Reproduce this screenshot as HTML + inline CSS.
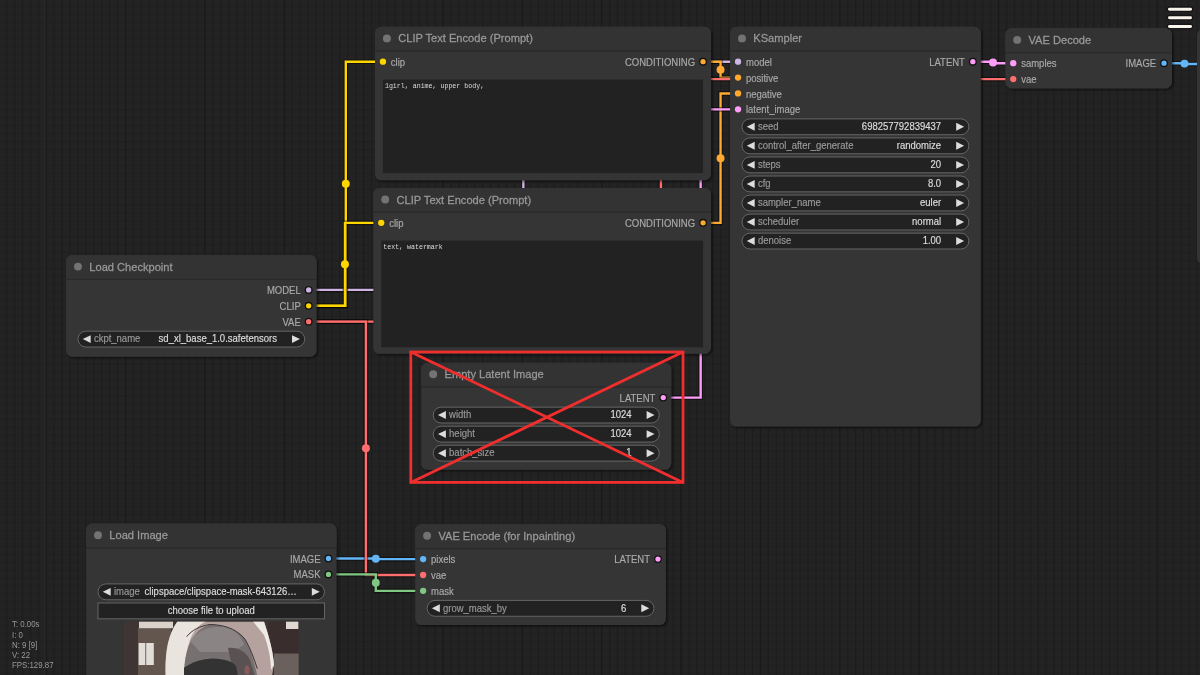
<!DOCTYPE html><html><head><meta charset="utf-8"><style>html,body{margin:0;padding:0;background:#222;overflow:hidden}svg{display:block;will-change:transform}</style></head><body>
<svg width="1200" height="675" viewBox="0 0 1200 675" font-family='"Liberation Sans", sans-serif'>
<defs>
<pattern id="g8" x="5.9" y="6.2" width="7.936" height="7.936" patternUnits="userSpaceOnUse">
<rect x="0" y="0" width="1.2" height="7.936" fill="#1c1c1c"/><rect x="0" y="0" width="7.936" height="1.2" fill="#1f1f1f"/>
</pattern>
<pattern id="g80" x="45.6" y="6.2" width="79.36" height="79.36" patternUnits="userSpaceOnUse">
<rect x="-0.2" y="0" width="1.4" height="79.36" fill="#1a1a1a"/>
</pattern>
<filter id="sh" x="-10%" y="-10%" width="120%" height="120%"><feDropShadow dx="1.6" dy="1.6" stdDeviation="1.3" flood-color="#000" flood-opacity="0.5"/></filter>
</defs>
<rect width="1200" height="675" fill="#232323"/>
<rect width="1200" height="675" fill="url(#g8)"/>
<rect width="1200" height="675" fill="url(#g80)"/>
<rect x="44.2" y="0" width="1.1" height="675" fill="#2c2c2c"/>
<path d="M308.66,289.92 H523.35 V61.72 H738.04" fill="none" stroke="rgba(0,0,0,0.45)" stroke-width="4.68"/>
<path d="M308.66,289.92 H523.35 V61.72 H738.04" fill="none" stroke="#CDB4E2" stroke-width="2.38"/>
<circle cx="523.35" cy="175.82" r="3.97" fill="#CDB4E2"/>
<path d="M703.06,61.72 H720.55 V77.59 H738.04" fill="none" stroke="rgba(0,0,0,0.45)" stroke-width="4.68"/>
<path d="M703.06,61.72 H720.55 V77.59 H738.04" fill="none" stroke="#FFA931" stroke-width="2.38"/>
<circle cx="720.55" cy="69.65" r="3.97" fill="#FFA931"/>
<path d="M703.06,222.82 H720.55 V93.46 H738.04" fill="none" stroke="rgba(0,0,0,0.45)" stroke-width="4.68"/>
<path d="M703.06,222.82 H720.55 V93.46 H738.04" fill="none" stroke="#FFA931" stroke-width="2.38"/>
<circle cx="720.55" cy="158.14" r="3.97" fill="#FFA931"/>
<path d="M663.26,397.62 H700.65 V109.33 H738.04" fill="none" stroke="rgba(0,0,0,0.45)" stroke-width="4.68"/>
<path d="M663.26,397.62 H700.65 V109.33 H738.04" fill="none" stroke="#FF9CF9" stroke-width="2.38"/>
<circle cx="700.65" cy="253.48" r="3.97" fill="#FF9CF9"/>
<path d="M972.86,61.72 H993.05 V63.22 H1013.24" fill="none" stroke="rgba(0,0,0,0.45)" stroke-width="4.68"/>
<path d="M972.86,61.72 H993.05 V63.22 H1013.24" fill="none" stroke="#FF9CF9" stroke-width="2.38"/>
<circle cx="993.05" cy="62.47" r="3.97" fill="#FF9CF9"/>
<path d="M308.66,321.66 H660.95 V79.09 H1013.24" fill="none" stroke="rgba(0,0,0,0.45)" stroke-width="4.68"/>
<path d="M308.66,321.66 H660.95 V79.09 H1013.24" fill="none" stroke="#FF6E6E" stroke-width="2.38"/>
<circle cx="660.95" cy="200.38" r="3.97" fill="#FF6E6E"/>
<path d="M308.66,305.79 H345.8 V61.72 H382.94" fill="none" stroke="rgba(0,0,0,0.45)" stroke-width="4.68"/>
<path d="M308.66,305.79 H345.8 V61.72 H382.94" fill="none" stroke="#FFD500" stroke-width="2.38"/>
<circle cx="345.8" cy="183.75" r="3.97" fill="#FFD500"/>
<path d="M308.66,305.79 H344.95 V222.82 H381.24" fill="none" stroke="rgba(0,0,0,0.45)" stroke-width="4.68"/>
<path d="M308.66,305.79 H344.95 V222.82 H381.24" fill="none" stroke="#FFD500" stroke-width="2.38"/>
<circle cx="344.95" cy="264.3" r="3.97" fill="#FFD500"/>
<path d="M328.46,558.52 H375.8 V559.12 H423.14" fill="none" stroke="rgba(0,0,0,0.45)" stroke-width="4.68"/>
<path d="M328.46,558.52 H375.8 V559.12 H423.14" fill="none" stroke="#64B5F6" stroke-width="2.38"/>
<circle cx="375.8" cy="558.82" r="3.97" fill="#64B5F6"/>
<path d="M308.66,321.66 H365.9 V574.99 H423.14" fill="none" stroke="rgba(0,0,0,0.45)" stroke-width="4.68"/>
<path d="M308.66,321.66 H365.9 V574.99 H423.14" fill="none" stroke="#FF6E6E" stroke-width="2.38"/>
<circle cx="365.9" cy="448.33" r="3.97" fill="#FF6E6E"/>
<path d="M328.46,574.39 H375.8 V590.86 H423.14" fill="none" stroke="rgba(0,0,0,0.45)" stroke-width="4.68"/>
<path d="M328.46,574.39 H375.8 V590.86 H423.14" fill="none" stroke="#81C784" stroke-width="2.38"/>
<circle cx="375.8" cy="582.63" r="3.97" fill="#81C784"/>
<path d="M1164.06,63.22 H1184.5 V64 H1204.94" fill="none" stroke="rgba(0,0,0,0.45)" stroke-width="4.68"/>
<path d="M1164.06,63.22 H1184.5 V64 H1204.94" fill="none" stroke="#64B5F6" stroke-width="2.38"/>
<circle cx="1184.5" cy="63.61" r="3.97" fill="#64B5F6"/>
<path d="M1203.35,28.8 H1230.65 A6.35,6.35 0 0 1 1237,35.15 V257.65 A6.35,6.35 0 0 1 1230.65,264 H1203.35 A6.35,6.35 0 0 1 1197,257.65 V35.15 A6.35,6.35 0 0 1 1203.35,28.8 Z" fill="#353535" filter="url(#sh)"/>
<g>
<path d="M381.35,26.8 H704.65 A6.35,6.35 0 0 1 711,33.15 V173.95 A6.35,6.35 0 0 1 704.65,180.3 H381.35 A6.35,6.35 0 0 1 375,173.95 V33.15 A6.35,6.35 0 0 1 381.35,26.8 Z" fill="#353535" filter="url(#sh)"/>
<path d="M381.35,26.8 H704.65 A6.35,6.35 0 0 1 711,33.15 V50.61 H375 V33.15 A6.35,6.35 0 0 1 381.35,26.8 Z" fill="#333"/>
<rect x="375" y="50.51" width="336" height="1.3" fill="rgba(0,0,0,0.2)"/>
<circle cx="386.9" cy="38.4" r="3.97" fill="#737373"/>
<text transform="translate(398.2,42.4) scale(1,1.05)" font-size="11.11" fill="#999" stroke="#999" stroke-width="0.25">CLIP Text Encode (Prompt)</text>
<circle cx="382.94" cy="61.72" r="3.15" fill="#FFD500"/>
<text transform="translate(390.87,65.82) scale(1,1.14)" font-size="9.52" fill="#AAA" stroke="#AAA" stroke-width="0.15">clip</text>
<circle cx="703.06" cy="61.72" r="3.3" fill="#FFA931" stroke="#111" stroke-width="1.3"/>
<text transform="translate(695.13,65.82) scale(1,1.14)" font-size="9.52" fill="#AAA" text-anchor="end" stroke="#AAA" stroke-width="0.15">CONDITIONING</text>
<rect x="382.94" y="79.61" width="320.13" height="93.49" fill="#222"/>
<text x="384.94" y="88.21" font-family="'Liberation Mono', monospace" font-size="6.62" fill="#DDD">1girl, anime, upper body,</text>
</g>
<g>
<path d="M379.65,187.9 H704.65 A6.35,6.35 0 0 1 711,194.25 V347.45 A6.35,6.35 0 0 1 704.65,353.8 H379.65 A6.35,6.35 0 0 1 373.3,347.45 V194.25 A6.35,6.35 0 0 1 379.65,187.9 Z" fill="#353535" filter="url(#sh)"/>
<path d="M379.65,187.9 H704.65 A6.35,6.35 0 0 1 711,194.25 V211.71 H373.3 V194.25 A6.35,6.35 0 0 1 379.65,187.9 Z" fill="#333"/>
<rect x="373.3" y="211.61" width="337.7" height="1.3" fill="rgba(0,0,0,0.2)"/>
<circle cx="385.2" cy="199.5" r="3.97" fill="#737373"/>
<text transform="translate(396.5,203.5) scale(1,1.05)" font-size="11.11" fill="#999" stroke="#999" stroke-width="0.25">CLIP Text Encode (Prompt)</text>
<circle cx="381.24" cy="222.82" r="3.15" fill="#FFD500"/>
<text transform="translate(389.17,226.92) scale(1,1.14)" font-size="9.52" fill="#AAA" stroke="#AAA" stroke-width="0.15">clip</text>
<circle cx="703.06" cy="222.82" r="3.3" fill="#FFA931" stroke="#111" stroke-width="1.3"/>
<text transform="translate(695.13,226.92) scale(1,1.14)" font-size="9.52" fill="#AAA" text-anchor="end" stroke="#AAA" stroke-width="0.15">CONDITIONING</text>
<rect x="381.24" y="240.61" width="321.83" height="106.69" fill="#222"/>
<text x="383.24" y="249.21" font-family="'Liberation Mono', monospace" font-size="6.62" fill="#DDD">text, watermark</text>
</g>
<g>
<path d="M736.45,26.8 H974.45 A6.35,6.35 0 0 1 980.8,33.15 V420.25 A6.35,6.35 0 0 1 974.45,426.6 H736.45 A6.35,6.35 0 0 1 730.1,420.25 V33.15 A6.35,6.35 0 0 1 736.45,26.8 Z" fill="#353535" filter="url(#sh)"/>
<path d="M736.45,26.8 H974.45 A6.35,6.35 0 0 1 980.8,33.15 V50.61 H730.1 V33.15 A6.35,6.35 0 0 1 736.45,26.8 Z" fill="#333"/>
<rect x="730.1" y="50.51" width="250.7" height="1.3" fill="rgba(0,0,0,0.2)"/>
<circle cx="742" cy="38.4" r="3.97" fill="#737373"/>
<text transform="translate(753.3,42.4) scale(1,1.05)" font-size="11.11" fill="#999" stroke="#999" stroke-width="0.25">KSampler</text>
<circle cx="738.04" cy="61.72" r="3.15" fill="#CDB4E2"/>
<text transform="translate(745.97,65.82) scale(1,1.14)" font-size="9.52" fill="#AAA" stroke="#AAA" stroke-width="0.15">model</text>
<circle cx="738.04" cy="77.59" r="3.15" fill="#FFA931"/>
<text transform="translate(745.97,81.69) scale(1,1.14)" font-size="9.52" fill="#AAA" stroke="#AAA" stroke-width="0.15">positive</text>
<circle cx="738.04" cy="93.46" r="3.15" fill="#FFA931"/>
<text transform="translate(745.97,97.56) scale(1,1.14)" font-size="9.52" fill="#AAA" stroke="#AAA" stroke-width="0.15">negative</text>
<circle cx="738.04" cy="109.33" r="3.15" fill="#FF9CF9"/>
<text transform="translate(745.97,113.43) scale(1,1.14)" font-size="9.52" fill="#AAA" stroke="#AAA" stroke-width="0.15">latent_image</text>
<circle cx="972.86" cy="61.72" r="3.3" fill="#FF9CF9" stroke="#111" stroke-width="1.3"/>
<text transform="translate(964.93,65.82) scale(1,1.14)" font-size="9.52" fill="#AAA" text-anchor="end" stroke="#AAA" stroke-width="0.15">LATENT</text>
<rect x="742" y="118.86" width="226.89" height="15.87" rx="7.94" fill="#222" stroke="#666" stroke-width="1"/>
<path d="M754.7,122.83 L746.77,126.79 L754.7,130.76 Z" fill="#DDD"/>
<path d="M956.2,122.83 L964.13,126.79 L956.2,130.76 Z" fill="#DDD"/>
<text transform="translate(757.88,129.97) scale(1,1.14)" font-size="9.52" fill="#999" stroke="#999" stroke-width="0.15">seed</text>
<text transform="translate(941.12,129.97) scale(1,1.14)" font-size="9.52" fill="#DDD" text-anchor="end" stroke="#DDD" stroke-width="0.15">698257792839437</text>
<rect x="742" y="137.9" width="226.89" height="15.87" rx="7.94" fill="#222" stroke="#666" stroke-width="1"/>
<path d="M754.7,141.87 L746.77,145.84 L754.7,149.81 Z" fill="#DDD"/>
<path d="M956.2,141.87 L964.13,145.84 L956.2,149.81 Z" fill="#DDD"/>
<text transform="translate(757.88,149.01) scale(1,1.14)" font-size="9.52" fill="#999" stroke="#999" stroke-width="0.15">control_after_generate</text>
<text transform="translate(941.12,149.01) scale(1,1.14)" font-size="9.52" fill="#DDD" text-anchor="end" stroke="#DDD" stroke-width="0.15">randomize</text>
<rect x="742" y="156.95" width="226.89" height="15.87" rx="7.94" fill="#222" stroke="#666" stroke-width="1"/>
<path d="M754.7,160.92 L746.77,164.89 L754.7,168.85 Z" fill="#DDD"/>
<path d="M956.2,160.92 L964.13,164.89 L956.2,168.85 Z" fill="#DDD"/>
<text transform="translate(757.88,168.06) scale(1,1.14)" font-size="9.52" fill="#999" stroke="#999" stroke-width="0.15">steps</text>
<text transform="translate(941.12,168.06) scale(1,1.14)" font-size="9.52" fill="#DDD" text-anchor="end" stroke="#DDD" stroke-width="0.15">20</text>
<rect x="742" y="176" width="226.89" height="15.87" rx="7.94" fill="#222" stroke="#666" stroke-width="1"/>
<path d="M754.7,179.96 L746.77,183.93 L754.7,187.9 Z" fill="#DDD"/>
<path d="M956.2,179.96 L964.13,183.93 L956.2,187.9 Z" fill="#DDD"/>
<text transform="translate(757.88,187.11) scale(1,1.14)" font-size="9.52" fill="#999" stroke="#999" stroke-width="0.15">cfg</text>
<text transform="translate(941.12,187.11) scale(1,1.14)" font-size="9.52" fill="#DDD" text-anchor="end" stroke="#DDD" stroke-width="0.15">8.0</text>
<rect x="742" y="195.04" width="226.89" height="15.87" rx="7.94" fill="#222" stroke="#666" stroke-width="1"/>
<path d="M754.7,199.01 L746.77,202.98 L754.7,206.95 Z" fill="#DDD"/>
<path d="M956.2,199.01 L964.13,202.98 L956.2,206.95 Z" fill="#DDD"/>
<text transform="translate(757.88,206.15) scale(1,1.14)" font-size="9.52" fill="#999" stroke="#999" stroke-width="0.15">sampler_name</text>
<text transform="translate(941.12,206.15) scale(1,1.14)" font-size="9.52" fill="#DDD" text-anchor="end" stroke="#DDD" stroke-width="0.15">euler</text>
<rect x="742" y="214.09" width="226.89" height="15.87" rx="7.94" fill="#222" stroke="#666" stroke-width="1"/>
<path d="M754.7,218.06 L746.77,222.03 L754.7,225.99 Z" fill="#DDD"/>
<path d="M956.2,218.06 L964.13,222.03 L956.2,225.99 Z" fill="#DDD"/>
<text transform="translate(757.88,225.2) scale(1,1.14)" font-size="9.52" fill="#999" stroke="#999" stroke-width="0.15">scheduler</text>
<text transform="translate(941.12,225.2) scale(1,1.14)" font-size="9.52" fill="#DDD" text-anchor="end" stroke="#DDD" stroke-width="0.15">normal</text>
<rect x="742" y="233.14" width="226.89" height="15.87" rx="7.94" fill="#222" stroke="#666" stroke-width="1"/>
<path d="M754.7,237.1 L746.77,241.07 L754.7,245.04 Z" fill="#DDD"/>
<path d="M956.2,237.1 L964.13,241.07 L956.2,245.04 Z" fill="#DDD"/>
<text transform="translate(757.88,244.25) scale(1,1.14)" font-size="9.52" fill="#999" stroke="#999" stroke-width="0.15">denoise</text>
<text transform="translate(941.12,244.25) scale(1,1.14)" font-size="9.52" fill="#DDD" text-anchor="end" stroke="#DDD" stroke-width="0.15">1.00</text>
</g>
<g>
<path d="M1011.65,28.3 H1165.65 A6.35,6.35 0 0 1 1172,34.65 V82.05 A6.35,6.35 0 0 1 1165.65,88.4 H1011.65 A6.35,6.35 0 0 1 1005.3,82.05 V34.65 A6.35,6.35 0 0 1 1011.65,28.3 Z" fill="#353535" filter="url(#sh)"/>
<path d="M1011.65,28.3 H1165.65 A6.35,6.35 0 0 1 1172,34.65 V52.11 H1005.3 V34.65 A6.35,6.35 0 0 1 1011.65,28.3 Z" fill="#333"/>
<rect x="1005.3" y="52.01" width="166.7" height="1.3" fill="rgba(0,0,0,0.2)"/>
<circle cx="1017.2" cy="39.9" r="3.97" fill="#737373"/>
<text transform="translate(1028.5,43.9) scale(1,1.05)" font-size="11.11" fill="#999" stroke="#999" stroke-width="0.25">VAE Decode</text>
<circle cx="1013.24" cy="63.22" r="3.15" fill="#FF9CF9"/>
<text transform="translate(1021.17,67.32) scale(1,1.14)" font-size="9.52" fill="#AAA" stroke="#AAA" stroke-width="0.15">samples</text>
<circle cx="1013.24" cy="79.09" r="3.15" fill="#FF6E6E"/>
<text transform="translate(1021.17,83.19) scale(1,1.14)" font-size="9.52" fill="#AAA" stroke="#AAA" stroke-width="0.15">vae</text>
<circle cx="1164.06" cy="63.22" r="3.3" fill="#64B5F6" stroke="#111" stroke-width="1.3"/>
<text transform="translate(1156.13,67.32) scale(1,1.14)" font-size="9.52" fill="#AAA" text-anchor="end" stroke="#AAA" stroke-width="0.15">IMAGE</text>
</g>
<g>
<path d="M72.45,255 H310.25 A6.35,6.35 0 0 1 316.6,261.35 V350.35 A6.35,6.35 0 0 1 310.25,356.7 H72.45 A6.35,6.35 0 0 1 66.1,350.35 V261.35 A6.35,6.35 0 0 1 72.45,255 Z" fill="#353535" filter="url(#sh)"/>
<path d="M72.45,255 H310.25 A6.35,6.35 0 0 1 316.6,261.35 V278.81 H66.1 V261.35 A6.35,6.35 0 0 1 72.45,255 Z" fill="#333"/>
<rect x="66.1" y="278.71" width="250.5" height="1.3" fill="rgba(0,0,0,0.2)"/>
<circle cx="78" cy="266.6" r="3.97" fill="#737373"/>
<text transform="translate(89.3,270.6) scale(1,1.05)" font-size="11.11" fill="#999" stroke="#999" stroke-width="0.25">Load Checkpoint</text>
<circle cx="308.66" cy="289.92" r="3.3" fill="#CDB4E2" stroke="#111" stroke-width="1.3"/>
<text transform="translate(300.73,294.02) scale(1,1.14)" font-size="9.52" fill="#AAA" text-anchor="end" stroke="#AAA" stroke-width="0.15">MODEL</text>
<circle cx="308.66" cy="305.79" r="3.3" fill="#FFD500" stroke="#111" stroke-width="1.3"/>
<text transform="translate(300.73,309.89) scale(1,1.14)" font-size="9.52" fill="#AAA" text-anchor="end" stroke="#AAA" stroke-width="0.15">CLIP</text>
<circle cx="308.66" cy="321.66" r="3.3" fill="#FF6E6E" stroke="#111" stroke-width="1.3"/>
<text transform="translate(300.73,325.76) scale(1,1.14)" font-size="9.52" fill="#AAA" text-anchor="end" stroke="#AAA" stroke-width="0.15">VAE</text>
<rect x="78" y="331.19" width="226.69" height="15.87" rx="7.94" fill="#222" stroke="#666" stroke-width="1"/>
<path d="M90.7,335.15 L82.77,339.12 L90.7,343.09 Z" fill="#DDD"/>
<path d="M292,335.15 L299.93,339.12 L292,343.09 Z" fill="#DDD"/>
<text transform="translate(93.88,342.3) scale(1,1.14)" font-size="9.52" fill="#999" stroke="#999" stroke-width="0.15">ckpt_name</text>
<text transform="translate(276.92,342.3) scale(1,1.14)" font-size="9.52" fill="#DDD" text-anchor="end" stroke="#DDD" stroke-width="0.15">sd_xl_base_1.0.safetensors</text>
</g>
<g>
<path d="M427.65,362.7 H664.85 A6.35,6.35 0 0 1 671.2,369.05 V463.45 A6.35,6.35 0 0 1 664.85,469.8 H427.65 A6.35,6.35 0 0 1 421.3,463.45 V369.05 A6.35,6.35 0 0 1 427.65,362.7 Z" fill="#353535" filter="url(#sh)"/>
<path d="M427.65,362.7 H664.85 A6.35,6.35 0 0 1 671.2,369.05 V386.51 H421.3 V369.05 A6.35,6.35 0 0 1 427.65,362.7 Z" fill="#333"/>
<rect x="421.3" y="386.41" width="249.9" height="1.3" fill="rgba(0,0,0,0.2)"/>
<circle cx="433.2" cy="374.3" r="3.97" fill="#737373"/>
<text transform="translate(444.5,378.3) scale(1,1.05)" font-size="11.11" fill="#999" stroke="#999" stroke-width="0.25">Empty Latent Image</text>
<circle cx="663.26" cy="397.62" r="3.3" fill="#FF9CF9" stroke="#111" stroke-width="1.3"/>
<text transform="translate(655.33,401.72) scale(1,1.14)" font-size="9.52" fill="#AAA" text-anchor="end" stroke="#AAA" stroke-width="0.15">LATENT</text>
<rect x="433.2" y="407.14" width="226.09" height="15.87" rx="7.94" fill="#222" stroke="#666" stroke-width="1"/>
<path d="M445.9,411.11 L437.97,415.08 L445.9,419.05 Z" fill="#DDD"/>
<path d="M646.6,411.11 L654.53,415.08 L646.6,419.05 Z" fill="#DDD"/>
<text transform="translate(449.08,418.25) scale(1,1.14)" font-size="9.52" fill="#999" stroke="#999" stroke-width="0.15">width</text>
<text transform="translate(631.52,418.25) scale(1,1.14)" font-size="9.52" fill="#DDD" text-anchor="end" stroke="#DDD" stroke-width="0.15">1024</text>
<rect x="433.2" y="426.19" width="226.09" height="15.87" rx="7.94" fill="#222" stroke="#666" stroke-width="1"/>
<path d="M445.9,430.16 L437.97,434.12 L445.9,438.09 Z" fill="#DDD"/>
<path d="M646.6,430.16 L654.53,434.12 L646.6,438.09 Z" fill="#DDD"/>
<text transform="translate(449.08,437.3) scale(1,1.14)" font-size="9.52" fill="#999" stroke="#999" stroke-width="0.15">height</text>
<text transform="translate(631.52,437.3) scale(1,1.14)" font-size="9.52" fill="#DDD" text-anchor="end" stroke="#DDD" stroke-width="0.15">1024</text>
<rect x="433.2" y="445.23" width="226.09" height="15.87" rx="7.94" fill="#222" stroke="#666" stroke-width="1"/>
<path d="M445.9,449.2 L437.97,453.17 L445.9,457.14 Z" fill="#DDD"/>
<path d="M646.6,449.2 L654.53,453.17 L646.6,457.14 Z" fill="#DDD"/>
<text transform="translate(449.08,456.34) scale(1,1.14)" font-size="9.52" fill="#999" stroke="#999" stroke-width="0.15">batch_size</text>
<text transform="translate(631.52,456.34) scale(1,1.14)" font-size="9.52" fill="#DDD" text-anchor="end" stroke="#DDD" stroke-width="0.15">1</text>
</g>
<g>
<path d="M92.45,523.6 H330.05 A6.35,6.35 0 0 1 336.4,529.95 V753.65 A6.35,6.35 0 0 1 330.05,760 H92.45 A6.35,6.35 0 0 1 86.1,753.65 V529.95 A6.35,6.35 0 0 1 92.45,523.6 Z" fill="#353535" filter="url(#sh)"/>
<path d="M92.45,523.6 H330.05 A6.35,6.35 0 0 1 336.4,529.95 V547.41 H86.1 V529.95 A6.35,6.35 0 0 1 92.45,523.6 Z" fill="#333"/>
<rect x="86.1" y="547.31" width="250.3" height="1.3" fill="rgba(0,0,0,0.2)"/>
<circle cx="98" cy="535.2" r="3.97" fill="#737373"/>
<text transform="translate(109.3,539.2) scale(1,1.05)" font-size="11.11" fill="#999" stroke="#999" stroke-width="0.25">Load Image</text>
<circle cx="328.46" cy="558.52" r="3.3" fill="#64B5F6" stroke="#111" stroke-width="1.3"/>
<text transform="translate(320.53,562.62) scale(1,1.14)" font-size="9.52" fill="#AAA" text-anchor="end" stroke="#AAA" stroke-width="0.15">IMAGE</text>
<circle cx="328.46" cy="574.39" r="3.3" fill="#81C784" stroke="#111" stroke-width="1.3"/>
<text transform="translate(320.53,578.49) scale(1,1.14)" font-size="9.52" fill="#AAA" text-anchor="end" stroke="#AAA" stroke-width="0.15">MASK</text>
<rect x="98" y="583.91" width="226.49" height="15.87" rx="7.94" fill="#222" stroke="#666" stroke-width="1"/>
<path d="M110.7,587.88 L102.77,591.85 L110.7,595.82 Z" fill="#DDD"/>
<path d="M311.8,587.88 L319.73,591.85 L311.8,595.82 Z" fill="#DDD"/>
<text transform="translate(113.88,595.02) scale(1,1.14)" font-size="9.52" fill="#999" stroke="#999" stroke-width="0.15">image</text>
<text transform="translate(296.72,595.02) scale(1,1.14)" font-size="9.52" fill="#DDD" text-anchor="end" stroke="#DDD" stroke-width="0.15">clipspace/clipspace-mask-643126…</text>
<rect x="98" y="602.96" width="226.49" height="15.87" fill="#222" stroke="#666" stroke-width="1"/>
<text transform="translate(211.25,614.07) scale(1,1.14)" font-size="9.52" fill="#DDD" text-anchor="middle" stroke="#DDD" stroke-width="0.15">choose file to upload</text>
<clipPath id="imgclip"><rect x="123.8" y="621.4" width="174.9" height="78.6"/></clipPath>
<g clip-path="url(#imgclip)">
<rect x="123.8" y="621.4" width="174.9" height="78.6" fill="#3f3535"/>
<rect x="138" y="628" width="33" height="50" fill="#62564f"/>
<rect x="139" y="621.4" width="34" height="6.8" fill="#d9d1ca"/>
<rect x="138.6" y="643" width="6.7" height="22" fill="#e3ddd7"/>
<rect x="146.2" y="643" width="7.6" height="22" fill="#e3ddd7"/>
<rect x="268" y="621.4" width="31" height="60" fill="#3a2d2d"/>
<rect x="286" y="621.4" width="12.5" height="7.6" fill="#e0d9d2"/>
<rect x="274" y="653.5" width="25" height="25" fill="#6a605c"/>
<path d="M165.6,676 C165,655 167,636 177.4,621.4 H264 C269,636.6 273.3,651.8 274,665 L272,676 Z" fill="#b5a19d"/>
<path d="M165.6,676 C165,655 167,636 177.4,621.4 H206 C195,626 186,638 184,676 Z" fill="#e9e4de"/>
<path d="M253,621.4 H264 C269,636.6 273.3,651.8 274,665 L271,670 C270.8,660 269,647.6 264,635 Z" fill="#eeeae5"/>
<path d="M184,676 C184,650 192,630 210,624.5 C228,625 240,632 245.5,640 C250,648 254,660 257.3,676 Z" fill="#777070"/>
<path d="M190,641 C198,630 210,626 226,627 C236,630 242,638 244,645 L232,652 L200,652 Z" fill="#8b8484"/>
<path d="M228,648 C238,647 246,652 250,660 L255,676 H234 Z" fill="#5a5252"/>
<path d="M186.7,636.6 C192,630 200,626 210,624.5 C228,624.6 240,632 245.5,640 C250,648 254,658 257.3,668.7" fill="none" stroke="#3c3636" stroke-width="1"/>
<path d="M184,676 L184,667.8 C192,662 203,658.5 213,658.5 C224,659 232,661 236,666 L238,676 Z" fill="#333"/>
<ellipse cx="247" cy="670" rx="2.5" ry="4.5" fill="#8a5a5a"/>
</g>
</g>
<g>
<path d="M421.55,524.2 H659.55 A6.35,6.35 0 0 1 665.9,530.55 V618.75 A6.35,6.35 0 0 1 659.55,625.1 H421.55 A6.35,6.35 0 0 1 415.2,618.75 V530.55 A6.35,6.35 0 0 1 421.55,524.2 Z" fill="#353535" filter="url(#sh)"/>
<path d="M421.55,524.2 H659.55 A6.35,6.35 0 0 1 665.9,530.55 V548.01 H415.2 V530.55 A6.35,6.35 0 0 1 421.55,524.2 Z" fill="#333"/>
<rect x="415.2" y="547.91" width="250.7" height="1.3" fill="rgba(0,0,0,0.2)"/>
<circle cx="427.1" cy="535.8" r="3.97" fill="#737373"/>
<text transform="translate(438.4,539.8) scale(1,1.05)" font-size="11.11" fill="#999" stroke="#999" stroke-width="0.25">VAE Encode (for Inpainting)</text>
<circle cx="423.14" cy="559.12" r="3.15" fill="#64B5F6"/>
<text transform="translate(431.07,563.22) scale(1,1.14)" font-size="9.52" fill="#AAA" stroke="#AAA" stroke-width="0.15">pixels</text>
<circle cx="423.14" cy="574.99" r="3.15" fill="#FF6E6E"/>
<text transform="translate(431.07,579.09) scale(1,1.14)" font-size="9.52" fill="#AAA" stroke="#AAA" stroke-width="0.15">vae</text>
<circle cx="423.14" cy="590.86" r="3.15" fill="#81C784"/>
<text transform="translate(431.07,594.96) scale(1,1.14)" font-size="9.52" fill="#AAA" stroke="#AAA" stroke-width="0.15">mask</text>
<circle cx="657.96" cy="559.12" r="3.3" fill="#FF9CF9" stroke="#111" stroke-width="1.3"/>
<text transform="translate(650.03,563.22) scale(1,1.14)" font-size="9.52" fill="#AAA" text-anchor="end" stroke="#AAA" stroke-width="0.15">LATENT</text>
<rect x="427.1" y="600.39" width="226.89" height="15.87" rx="7.94" fill="#222" stroke="#666" stroke-width="1"/>
<path d="M439.8,604.35 L431.87,608.32 L439.8,612.29 Z" fill="#DDD"/>
<path d="M641.3,604.35 L649.23,608.32 L641.3,612.29 Z" fill="#DDD"/>
<text transform="translate(442.98,611.5) scale(1,1.14)" font-size="9.52" fill="#999" stroke="#999" stroke-width="0.15">grow_mask_by</text>
<text transform="translate(626.22,611.5) scale(1,1.14)" font-size="9.52" fill="#DDD" text-anchor="end" stroke="#DDD" stroke-width="0.15">6</text>
</g>
<g stroke="#f02e2e" stroke-width="2.8" fill="none">
<rect x="410.8" y="352" width="272.2" height="130.4"/>
<path d="M410.8,352 L683,482.4 M683,352 L410.8,482.4"/>
</g>
<rect x="1166.6" y="6.3" width="26.8" height="5.8" rx="2.9" fill="rgba(0,0,0,0.35)"/>
<rect x="1166.6" y="14.85" width="26.8" height="5.8" rx="2.9" fill="rgba(0,0,0,0.35)"/>
<rect x="1166.6" y="23.55" width="26.8" height="5.8" rx="2.9" fill="rgba(0,0,0,0.35)"/>
<rect x="1168" y="7.75" width="24" height="2.9" rx="1.45" fill="#f8f4ec"/>
<rect x="1168" y="16.3" width="24" height="2.9" rx="1.45" fill="#f8f4ec"/>
<rect x="1168" y="25" width="24" height="2.9" rx="1.45" fill="#f8f4ec"/>
<g font-size="8.8" fill="#999">
<text transform="translate(12,627.3) scale(0.895,1)">T: 0.00s</text>
<text transform="translate(12,637.55) scale(0.895,1)">I: 0</text>
<text transform="translate(12,647.8) scale(0.895,1)">N: 9 [9]</text>
<text transform="translate(12,658.05) scale(0.895,1)">V: 22</text>
<text transform="translate(12,668.3) scale(0.895,1)">FPS:129.87</text>
</g>
</svg></body></html>
